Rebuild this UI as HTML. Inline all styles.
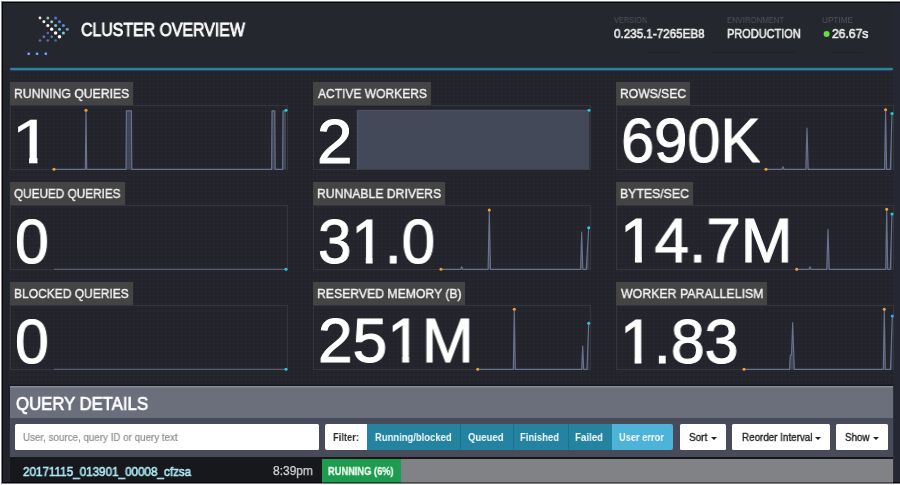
<!DOCTYPE html>
<html lang="en">
<head>
<meta charset="utf-8">
<title>Cluster Overview</title>
<style>
html,body{margin:0;padding:0}
body{width:900px;height:485px;overflow:hidden;background:#fff;position:relative;font-family:"Liberation Sans",sans-serif}
#page{position:absolute;left:0;top:0;width:900px;height:485px;filter:blur(.45px)}
.a{position:absolute}
.t{position:absolute;white-space:nowrap;transform-origin:0 0;will-change:transform;font-family:"Liberation Sans",sans-serif}
#edge{left:1px;top:1px;width:899px;height:483px;background:#808084}
#frame{left:2px;top:2px;width:898px;height:481px;background:#050609}
#win{left:3px;top:3px;width:897px;height:479px;background:#25272f;overflow:hidden}
#grid{left:9px;top:71px;width:884.5px;height:411px;background-color:#23242b;
 background-image:linear-gradient(rgba(255,255,255,.015) 1px,transparent 1px),linear-gradient(90deg,rgba(255,255,255,.015) 1px,transparent 1px);
 background-size:4px 4px}
#rband{left:893px;top:3px;width:7px;height:479px;background:#252832}
#teal{left:10px;top:67.2px;width:883px;height:4.2px;border-radius:2px;background:linear-gradient(#20323a 0,#1c4652 22%,#348ca6 42%,#3892ad 58%,#1f557c 78%,#1a2c46 100%)}
#lstrip{left:3px;top:71px;width:6px;height:411px;background:#20232b}
.gh{position:absolute;top:51.5px;height:1.6px;background:rgba(10,10,16,.22);filter:blur(.6px)}
.lb{position:absolute;height:24px;background:#444444}
.mb{position:absolute;width:276px;height:63px;border:1px solid #35363d;box-sizing:content-box}
#qh{left:10px;top:386px;width:883px;height:32px;background:#6b6f7c;box-shadow:0 -1.5px 2px rgba(8,8,12,.55),inset 0 1.5px 0 #878a95}
#fb{left:10px;top:418px;width:883px;height:38.5px;background:#474b5a}
#qr{left:10px;top:456.5px;width:883px;height:25.5px;background:#17181c}
.wb{position:absolute;top:424.3px;height:25.4px;background:#fff;border-radius:1.5px}
.tb{position:absolute;top:424.3px;height:25.4px;background:#2483a1}
.caret{position:absolute;width:0;height:0;border-left:3.2px solid transparent;border-right:3.2px solid transparent;border-top:3.3px solid #222;top:436.5px}
.one{display:inline-block;clip-path:polygon(0 0,100% 0,100% .744em,.351em .744em,.351em 100%,.240em 100%,.240em .744em,0 .744em)}
</style>
</head>
<body>
<div id="page">
<div class="a" id="edge"></div>
<div class="a" id="frame"></div>
<div class="a" id="win"></div>
<div class="a" id="grid"></div>
<div class="a" id="rband"></div>
<div class="a" id="lstrip"></div>
<div class="gh" style="left:648px;width:32px"></div>
<div class="gh" style="left:712px;width:83px"></div>
<div class="gh" style="left:832px;width:31px"></div>
<div class="a" id="teal"></div>

<!-- label boxes -->
<div class="lb" style="left:9.5px;top:81.5px;width:123.5px"></div>
<div class="lb" style="left:312.5px;top:81.5px;width:118.5px"></div>
<div class="lb" style="left:616px;top:81.5px;width:74px"></div>
<div class="lb" style="left:9.5px;top:181.5px;width:115.5px"></div>
<div class="lb" style="left:312.5px;top:181.5px;width:132.5px"></div>
<div class="lb" style="left:616px;top:181.5px;width:77px"></div>
<div class="lb" style="left:9.5px;top:281.5px;width:123.2px"></div>
<div class="lb" style="left:312.5px;top:281.5px;width:152.5px"></div>
<div class="lb" style="left:616px;top:281.5px;width:150.7px"></div>

<!-- metric boxes -->
<div class="mb" style="left:10px;top:105px"></div>
<div class="mb" style="left:313px;top:105px"></div>
<div class="mb" style="left:616px;top:105px"></div>
<div class="mb" style="left:10px;top:205px"></div>
<div class="mb" style="left:313px;top:205px"></div>
<div class="mb" style="left:616px;top:205px"></div>
<div class="mb" style="left:10px;top:305px"></div>
<div class="mb" style="left:313px;top:305px"></div>
<div class="mb" style="left:616px;top:305px"></div>

<!-- query details -->
<div class="a" id="qh"></div>
<div class="a" id="fb"></div>
<div class="a" id="qr"></div>
<div class="wb" style="left:14.5px;width:304px"></div>
<div class="wb" style="left:325px;width:44px;border-radius:2px 0 0 2px"></div>
<div class="tb" style="left:366.7px;width:93.3px"></div>
<div class="tb" style="left:460px;width:52.5px;border-left:1.5px solid #1e718d"></div>
<div class="tb" style="left:512.5px;width:55.2px;border-left:1.5px solid #1e718d"></div>
<div class="tb" style="left:567.7px;width:44px;border-left:1.5px solid #1e718d"></div>
<div class="tb" style="left:611.7px;width:61.6px;background:#4db3d9;border-radius:0 2px 2px 0"></div>
<div class="wb" style="left:680px;width:46px"></div>
<div class="wb" style="left:732.3px;width:98px"></div>
<div class="wb" style="left:836px;width:52.4px"></div>
<div class="caret" style="left:710.7px"></div>
<div class="caret" style="left:814.9px"></div>
<div class="caret" style="left:872.6px"></div>
<div class="a" style="left:321.7px;top:459.3px;width:79.3px;height:22.7px;background:#1d9b4e"></div>
<div class="a" style="left:401px;top:459.3px;width:492px;height:22.7px;background:#818286"></div>

<div class="a" style="left:401px;top:482px;width:492px;height:1px;background:#47474b"></div>
<div class="a" style="left:321.7px;top:482px;width:79.3px;height:1px;background:#0f4a27"></div>
<div class="a" style="left:893.3px;top:386px;width:1.2px;height:96px;background:#2f323c"></div>
<!-- sparklines, logo and dots -->
<svg class="a" style="left:0;top:0" width="900" height="485" viewBox="0 0 900 485">
<path d="M54.0,169.3 L85.3,169.3 L86.0,110.5 L86.7,169.3 L126.0,169.3 L126.4,110.8 L131.4,110.8 L131.8,169.3 L271.6,169.3 L272.0,110.8 L274.8,110.8 L275.2,169.3 L282.6,169.3 L283.0,110.8 L286.0,110.8 L286.0,169.3 L54.0,169.3 Z" fill="rgba(110,122,155,0.38)" stroke="none"/>
<path d="M54.0,169.3 L85.3,169.3 L86.0,110.5 L86.7,169.3 L126.0,169.3 L126.4,110.8 L131.4,110.8 L131.8,169.3 L271.6,169.3 L272.0,110.8 L274.8,110.8 L275.2,169.3 L282.6,169.3 L283.0,110.8 L286.0,110.8" fill="none" stroke="#69728e" stroke-width="1.15" stroke-linejoin="round"/>
<circle cx="54.0" cy="169.3" r="1.55" fill="#f0a030"/>
<circle cx="86.0" cy="110.3" r="1.55" fill="#f0a030"/>
<circle cx="286.0" cy="110.3" r="1.55" fill="#22c8e0"/>
<rect x="357.3" y="110.3" width="232" height="59.3" fill="#434958"/>
<path d="M357.3,169.6 L357.3,110.3 L589.3,110.3" fill="none" stroke="#4f566a" stroke-width="1"/>
<circle cx="589" cy="110.3" r="1.55" fill="#22c8e0"/>
<path d="M766.0,169.3 L782.0,169.3 L783.0,166.8 L784.0,169.3 L805.8,169.3 L807.0,128.0 L808.2,169.3 L884.6,169.3 L885.6,110.0 L886.6,169.3 L890.3,169.3 L892.0,113.8 L892.0,169.3 L766.0,169.3 Z" fill="rgba(110,122,155,0.38)" stroke="none"/>
<path d="M766.0,169.3 L782.0,169.3 L783.0,166.8 L784.0,169.3 L805.8,169.3 L807.0,128.0 L808.2,169.3 L884.6,169.3 L885.6,110.0 L886.6,169.3 L890.3,169.3 L892.0,113.8" fill="none" stroke="#69728e" stroke-width="1.15" stroke-linejoin="round"/>
<circle cx="766.0" cy="169.3" r="1.55" fill="#f0a030"/>
<circle cx="885.6" cy="109.8" r="1.55" fill="#f0a030"/>
<circle cx="892.0" cy="113.5" r="1.55" fill="#22c8e0"/>
<path d="M54,269.3 L286,269.3" stroke="#565d70" stroke-width="1.2" fill="none"/>
<circle cx="286" cy="269.3" r="1.55" fill="#22c8e0"/>
<path d="M441.0,269.3 L460.7,269.3 L461.7,266.8 L462.7,269.3 L488.1,269.3 L489.3,210.3 L490.5,269.3 L580.6,269.3 L581.7,232.0 L582.8,269.3 L586.3,269.3 L588.7,227.7 L588.7,269.3 L441.0,269.3 Z" fill="rgba(110,122,155,0.38)" stroke="none"/>
<path d="M441.0,269.3 L460.7,269.3 L461.7,266.8 L462.7,269.3 L488.1,269.3 L489.3,210.3 L490.5,269.3 L580.6,269.3 L581.7,232.0 L582.8,269.3 L586.3,269.3 L588.7,227.7" fill="none" stroke="#69728e" stroke-width="1.15" stroke-linejoin="round"/>
<circle cx="441.0" cy="269.3" r="1.55" fill="#f0a030"/>
<circle cx="489.3" cy="210.0" r="1.55" fill="#f0a030"/>
<circle cx="588.7" cy="227.7" r="1.55" fill="#22c8e0"/>
<path d="M796.7,269.3 L809.0,269.3 L810.0,266.8 L811.0,269.3 L826.8,269.3 L828.0,229.3 L829.2,269.3 L885.7,269.3 L886.7,209.6 L887.7,269.3 L890.3,269.3 L892.0,214.0 L892.0,269.3 L796.7,269.3 Z" fill="rgba(110,122,155,0.38)" stroke="none"/>
<path d="M796.7,269.3 L809.0,269.3 L810.0,266.8 L811.0,269.3 L826.8,269.3 L828.0,229.3 L829.2,269.3 L885.7,269.3 L886.7,209.6 L887.7,269.3 L890.3,269.3 L892.0,214.0" fill="none" stroke="#69728e" stroke-width="1.15" stroke-linejoin="round"/>
<circle cx="796.7" cy="269.3" r="1.55" fill="#f0a030"/>
<circle cx="886.7" cy="209.3" r="1.55" fill="#f0a030"/>
<circle cx="892.0" cy="214.0" r="1.55" fill="#22c8e0"/>
<path d="M54,369.3 L286,369.3" stroke="#565d70" stroke-width="1.2" fill="none"/>
<circle cx="286" cy="369.3" r="1.55" fill="#22c8e0"/>
<path d="M477.7,369.3 L513.3,369.3 L514.3,309.6 L515.3,369.3 L581.7,369.3 L582.7,346.0 L583.7,369.3 L587.0,369.3 L588.7,323.3 L588.7,369.3 L477.7,369.3 Z" fill="rgba(110,122,155,0.38)" stroke="none"/>
<path d="M477.7,369.3 L513.3,369.3 L514.3,309.6 L515.3,369.3 L581.7,369.3 L582.7,346.0 L583.7,369.3 L587.0,369.3 L588.7,323.3" fill="none" stroke="#69728e" stroke-width="1.15" stroke-linejoin="round"/>
<circle cx="477.7" cy="369.3" r="1.55" fill="#f0a030"/>
<circle cx="514.3" cy="309.3" r="1.55" fill="#f0a030"/>
<circle cx="588.7" cy="323.3" r="1.55" fill="#22c8e0"/>
<path d="M744.0,369.3 L789.5,369.3 L790.3,355.0 L791.5,355.0 L792.7,322.7 L794.3,369.3 L883.3,369.3 L884.3,309.6 L885.3,369.3 L890.5,369.3 L892.3,316.0 L892.3,369.3 L744.0,369.3 Z" fill="rgba(110,122,155,0.38)" stroke="none"/>
<path d="M744.0,369.3 L789.5,369.3 L790.3,355.0 L791.5,355.0 L792.7,322.7 L794.3,369.3 L883.3,369.3 L884.3,309.6 L885.3,369.3 L890.5,369.3 L892.3,316.0" fill="none" stroke="#69728e" stroke-width="1.15" stroke-linejoin="round"/>
<circle cx="744.0" cy="369.3" r="1.55" fill="#f0a030"/>
<circle cx="884.3" cy="309.3" r="1.55" fill="#f0a030"/>
<circle cx="892.3" cy="316.0" r="1.55" fill="#3aa8e8"/>
<circle cx="40.0" cy="18.0" r="1.4" fill="#e8e8e0"/>
<circle cx="43.9" cy="21.8" r="1.48" fill="#f4f4f4"/>
<circle cx="47.8" cy="25.5" r="1.5599999999999998" fill="#ffffff"/>
<circle cx="51.7" cy="29.2" r="1.64" fill="#ffffff"/>
<circle cx="55.6" cy="33.0" r="1.72" fill="#ffffff"/>
<circle cx="59.5" cy="36.8" r="1.7999999999999998" fill="#ffffff"/>
<circle cx="47.8" cy="18.0" r="1.5" fill="#8fc0a8"/>
<circle cx="51.7" cy="21.8" r="1.5" fill="#8fcfb0"/>
<circle cx="55.6" cy="25.5" r="1.5" fill="#6fc8e0"/>
<circle cx="59.5" cy="29.2" r="1.5" fill="#5fd0e0"/>
<circle cx="63.4" cy="33.0" r="1.5" fill="#70d0e8"/>
<circle cx="55.6" cy="18.0" r="1.5" fill="#5570c0"/>
<circle cx="59.5" cy="21.8" r="1.5" fill="#5a80d8"/>
<circle cx="63.4" cy="25.5" r="1.5" fill="#5a90e0"/>
<circle cx="67.3" cy="29.2" r="1.5" fill="#7a90c8"/>
<circle cx="47.8" cy="33.0" r="1.35" fill="#5a66b8"/>
<circle cx="43.9" cy="36.8" r="1.35" fill="#6a70c0"/>
<circle cx="40.0" cy="40.5" r="1.35" fill="#6068b0"/>
<circle cx="51.7" cy="36.8" r="1.35" fill="#5580c0"/>
<circle cx="47.8" cy="40.5" r="1.35" fill="#5a68a8"/>
<circle cx="55.6" cy="40.5" r="1.35" fill="#4a6898"/>
<circle cx="28.7" cy="53.7" r="2.3" fill="#1c2a5c"/>
<circle cx="28.7" cy="53.7" r="1.3" fill="#97a6e2"/>
<circle cx="37.1" cy="53.7" r="2.3" fill="#1c2a5c"/>
<circle cx="37.1" cy="53.7" r="1.3" fill="#97a6e2"/>
<circle cx="45.8" cy="53.7" r="2.3" fill="#1c2a5c"/>
<circle cx="45.8" cy="53.7" r="1.3" fill="#97a6e2"/>
<circle cx="826.6" cy="34" r="3" fill="#66dd44"/>
</svg>

<div class="t" style="left:80.63px;top:21.53px;font-size:17.8px;line-height:17.8px;font-weight:400;color:#fbfbfb;transform:scaleX(0.8929);-webkit-text-stroke:0.85px #fbfbfb;">CLUSTER OVERVIEW</div>
<div class="t" style="left:613.89px;top:17.16px;font-size:8.2px;line-height:8.2px;font-weight:400;color:#50535c;transform:scaleX(0.9011);">VERSION</div>
<div class="t" style="left:614.00px;top:28.26px;font-size:12.8px;line-height:12.8px;font-weight:400;color:#ececec;transform:scaleX(0.9093);-webkit-text-stroke:0.6px #ececec;">0.235.1-7265EB8</div>
<div class="t" style="left:726.56px;top:17.16px;font-size:8.2px;line-height:8.2px;font-weight:400;color:#50535c;transform:scaleX(0.9435);">ENVIRONMENT</div>
<div class="t" style="left:726.71px;top:28.26px;font-size:12.8px;line-height:12.8px;font-weight:400;color:#ececec;transform:scaleX(0.8575);-webkit-text-stroke:0.6px #ececec;">PRODUCTION</div>
<div class="t" style="left:821.62px;top:17.16px;font-size:8.2px;line-height:8.2px;font-weight:400;color:#50535c;transform:scaleX(0.9937);">UPTIME</div>
<div class="t" style="left:832.13px;top:28.26px;font-size:12.8px;line-height:12.8px;font-weight:400;color:#ececec;transform:scaleX(0.9452);-webkit-text-stroke:0.6px #ececec;">26.67s</div>
<div class="t" style="left:13.64px;top:87.39px;font-size:13.6px;line-height:13.6px;font-weight:400;color:#f2f2f2;transform:scaleX(0.8977);-webkit-text-stroke:0.4px #f2f2f2;">RUNNING QUERIES</div>
<div class="t" style="left:317.50px;top:87.39px;font-size:13.6px;line-height:13.6px;font-weight:400;color:#f2f2f2;transform:scaleX(0.8850);-webkit-text-stroke:0.4px #f2f2f2;">ACTIVE WORKERS</div>
<div class="t" style="left:619.64px;top:87.39px;font-size:13.6px;line-height:13.6px;font-weight:400;color:#f2f2f2;transform:scaleX(0.8928);-webkit-text-stroke:0.4px #f2f2f2;">ROWS/SEC</div>
<div class="t" style="left:14.24px;top:187.39px;font-size:13.6px;line-height:13.6px;font-weight:400;color:#f2f2f2;transform:scaleX(0.8651);-webkit-text-stroke:0.4px #f2f2f2;">QUEUED QUERIES</div>
<div class="t" style="left:316.64px;top:187.39px;font-size:13.6px;line-height:13.6px;font-weight:400;color:#f2f2f2;transform:scaleX(0.8979);-webkit-text-stroke:0.4px #f2f2f2;">RUNNABLE DRIVERS</div>
<div class="t" style="left:619.63px;top:187.39px;font-size:13.6px;line-height:13.6px;font-weight:400;color:#f2f2f2;transform:scaleX(0.9035);-webkit-text-stroke:0.4px #f2f2f2;">BYTES/SEC</div>
<div class="t" style="left:13.65px;top:287.39px;font-size:13.6px;line-height:13.6px;font-weight:400;color:#f2f2f2;transform:scaleX(0.8834);-webkit-text-stroke:0.4px #f2f2f2;">BLOCKED QUERIES</div>
<div class="t" style="left:316.63px;top:287.39px;font-size:13.6px;line-height:13.6px;font-weight:400;color:#f2f2f2;transform:scaleX(0.8990);-webkit-text-stroke:0.4px #f2f2f2;">RESERVED MEMORY (B)</div>
<div class="t" style="left:620.50px;top:287.39px;font-size:13.6px;line-height:13.6px;font-weight:400;color:#f2f2f2;transform:scaleX(0.9083);-webkit-text-stroke:0.4px #f2f2f2;">WORKER PARALLELISM</div>
<div class="t" style="left:11.06px;top:110.09px;font-size:62.5px;line-height:62.5px;font-weight:400;color:#ffffff;transform:scaleX(1.2044);-webkit-text-stroke:0.3px #fff;"><span class="one">1</span></div>
<div class="t" style="left:317.37px;top:110.09px;font-size:62.5px;line-height:62.5px;font-weight:400;color:#ffffff;transform:scaleX(1.0196);-webkit-text-stroke:1.0px #fff;">2</div>
<div class="t" style="left:620.73px;top:109.39px;font-size:62.5px;line-height:62.5px;font-weight:400;color:#ffffff;transform:scaleX(0.9541);-webkit-text-stroke:1.0px #fff;">690K</div>
<div class="t" style="left:15.35px;top:210.09px;font-size:62.5px;line-height:62.5px;font-weight:400;color:#ffffff;transform:scaleX(0.9747);-webkit-text-stroke:1.0px #fff;">0</div>
<div class="t" style="left:318.05px;top:210.09px;font-size:62.5px;line-height:62.5px;font-weight:400;color:#ffffff;transform:scaleX(0.9613);-webkit-text-stroke:1.0px #fff;">3<span class="one">1</span>.0</div>
<div class="t" style="left:619.59px;top:209.39px;font-size:62.5px;line-height:62.5px;font-weight:400;color:#ffffff;transform:scaleX(0.9925);-webkit-text-stroke:1.0px #fff;"><span class="one">1</span>4.7M</div>
<div class="t" style="left:15.35px;top:310.09px;font-size:62.5px;line-height:62.5px;font-weight:400;color:#ffffff;transform:scaleX(0.9747);-webkit-text-stroke:1.0px #fff;">0</div>
<div class="t" style="left:318.13px;top:309.39px;font-size:62.5px;line-height:62.5px;font-weight:400;color:#ffffff;transform:scaleX(0.9958);-webkit-text-stroke:1.0px #fff;">25<span class="one">1</span>M</div>
<div class="t" style="left:619.69px;top:310.09px;font-size:62.5px;line-height:62.5px;font-weight:400;color:#ffffff;transform:scaleX(0.9731);-webkit-text-stroke:1.0px #fff;"><span class="one">1</span>.83</div>
<div class="t" style="left:16.00px;top:394.69px;font-size:18.2px;line-height:18.2px;font-weight:400;color:#ffffff;transform:scaleX(0.9200);-webkit-text-stroke:0.7px #fff;">QUERY DETAILS</div>
<div class="t" style="left:22.94px;top:431.74px;font-size:10.7px;line-height:10.7px;font-weight:400;color:#8d8d8d;transform:scaleX(0.9165);-webkit-text-stroke:0.2px #8d8d8d;">User, source, query ID or query text</div>
<div class="t" style="left:332.81px;top:431.74px;font-size:10.7px;line-height:10.7px;font-weight:700;color:#2a2a2a;transform:scaleX(0.8732);">Filter:</div>
<div class="t" style="left:374.90px;top:431.74px;font-size:10.7px;line-height:10.7px;font-weight:700;color:#f4fbfd;transform:scaleX(0.8830);">Running/blocked</div>
<div class="t" style="left:467.90px;top:431.74px;font-size:10.7px;line-height:10.7px;font-weight:700;color:#f4fbfd;transform:scaleX(0.8932);">Queued</div>
<div class="t" style="left:519.80px;top:431.74px;font-size:10.7px;line-height:10.7px;font-weight:700;color:#f4fbfd;transform:scaleX(0.8861);">Finished</div>
<div class="t" style="left:575.07px;top:431.74px;font-size:10.7px;line-height:10.7px;font-weight:700;color:#f4fbfd;transform:scaleX(0.9089);">Failed</div>
<div class="t" style="left:619.48px;top:431.74px;font-size:10.7px;line-height:10.7px;font-weight:700;color:#f4fbfd;transform:scaleX(0.8680);">User error</div>
<div class="t" style="left:688.83px;top:431.74px;font-size:10.7px;line-height:10.7px;font-weight:400;color:#222;transform:scaleX(0.9287);-webkit-text-stroke:0.35px #222;">Sort</div>
<div class="t" style="left:741.67px;top:431.74px;font-size:10.7px;line-height:10.7px;font-weight:400;color:#222;transform:scaleX(0.9187);-webkit-text-stroke:0.35px #222;">Reorder Interval</div>
<div class="t" style="left:845.33px;top:431.74px;font-size:10.7px;line-height:10.7px;font-weight:400;color:#222;transform:scaleX(0.9153);-webkit-text-stroke:0.35px #222;">Show</div>
<div class="t" style="left:23.32px;top:465.90px;font-size:12.4px;line-height:12.4px;font-weight:400;color:#aeeaf7;transform:scaleX(0.9413);-webkit-text-stroke:0.55px #aeeaf7;">20171115_013901_00008_cfzsa</div>
<div class="t" style="left:273.39px;top:465.34px;font-size:12.0px;line-height:12.0px;font-weight:400;color:#d4d4d4;transform:scaleX(0.9947);-webkit-text-stroke:0.25px #d4d4d4;">8:39pm</div>
<div class="t" style="left:328.49px;top:466.44px;font-size:10.7px;line-height:10.7px;font-weight:700;color:#f0fbf2;transform:scaleX(0.8695);-webkit-text-stroke:0.3px #f0fbf2;">RUNNING (6%)</div>
</div>

</body></html>
